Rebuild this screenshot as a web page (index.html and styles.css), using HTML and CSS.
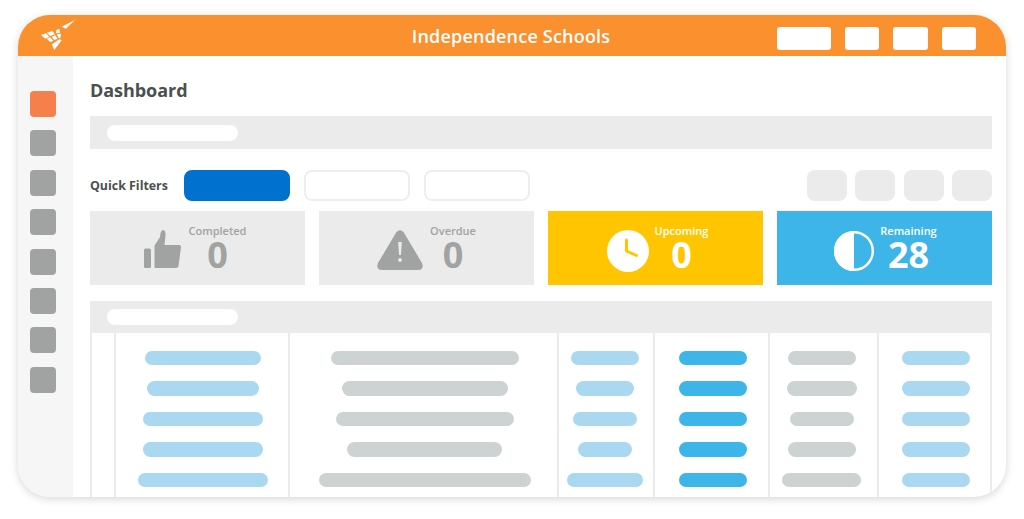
FILE: index.html
```html
<!DOCTYPE html>
<html lang="en">
<head>
<meta charset="utf-8">
<title>Independence Schools</title>
<link rel="stylesheet" href="styles.css">
</head>
<body>
<div class="window">
  <header class="topbar">
    <div class="top-left">
      <svg class="logo" viewBox="12 9 108 96" aria-hidden="true">
        <path d="M15 57 L30 52 L40 62 L27.500 68 Z" fill="#fff"/>
        <path d="M32.500 50 L48.600 45 L57 55 L42.400 60 Z" fill="#fff"/>
        <path d="M61 42 L69.800 38 L72.300 50 L59.800 52 Z" fill="#fff"/>
        <path d="M117 12 L77 32 L89.700 38 Z" fill="#fff"/>
        <path d="M32.500 68 L42.400 64 L52.400 74 L42.400 78 Z" fill="#fff"/>
        <path d="M47.400 62 L57.300 58 L64.800 68 L54.800 72 Z" fill="#fff"/>
        <path d="M62.300 55 L74.800 53 L73.500 65 L68.500 67 Z" fill="#fff"/>
        <path d="M47.400 85 L69.800 70 L77.200 73 L54.800 102 Z" fill="#fff"/>
      </svg>
    </div>
    <h1 class="app-title">Independence Schools</h1>
    <div class="top-actions">
      <span class="top-btn top-btn-wide"></span>
      <span class="top-btn"></span>
      <span class="top-btn"></span>
      <span class="top-btn"></span>
    </div>
  </header>
  <div class="body-row">
    <nav class="sidebar">
      <span class="nav-item nav-item-active"></span>
      <span class="nav-item"></span>
      <span class="nav-item"></span>
      <span class="nav-item"></span>
      <span class="nav-item"></span>
      <span class="nav-item"></span>
      <span class="nav-item"></span>
      <span class="nav-item"></span>
    </nav>
    <main class="content">
      <h2 class="page-title">Dashboard</h2>
      <div class="section-bar"><span class="section-pill"></span></div>
      <div class="filters">
        <span class="filters-label">Quick Filters</span>
        <span class="filter filter-on"></span>
        <span class="filter"></span>
        <span class="filter"></span>
        <div class="tools">
          <span class="tool"></span>
          <span class="tool"></span>
          <span class="tool"></span>
          <span class="tool"></span>
        </div>
      </div>
      <div class="cards">
        <div class="card card-grey card-completed">
          <svg class="icon icon-thumb" viewBox="0 0 37 38" aria-hidden="true">
            <rect x="0" y="18.500" width="7" height="19.500" rx="1.500"/>
            <path d="M10.500 37 V15.500 L16 7 Q16.500 0 19 0 Q22 0.500 21.500 6 L20.500 15 H35.500 Q37 15 37 17 L34.500 36 Q34.200 38 32 38 H11.500 Q10.500 38 10.500 37 Z"/>
          </svg>
          <div class="stat"><span class="stat-label">Completed</span><span class="stat-num">0</span></div>
        </div>
        <div class="card card-grey card-overdue">
          <svg class="icon icon-warn" viewBox="0 0 46 40" aria-hidden="true">
            <path fill-rule="evenodd" d="M19.500 2 Q23 -1.500 26.500 2 L45 33 Q47.500 40 41 40 H5 Q-1.500 40 1 33 Z M21.200 12 L22 25 H24 L24.800 12 Z M23 28 A1.900 1.900 0 1 0 23 31.800 A1.900 1.900 0 1 0 23 28 Z"/>
          </svg>
          <div class="stat"><span class="stat-label">Overdue</span><span class="stat-num">0</span></div>
        </div>
        <div class="card card-yellow card-upcoming">
          <svg class="icon icon-clock" viewBox="0 0 42 42" aria-hidden="true">
            <circle cx="21" cy="21" r="21" fill="#fff"/>
            <path d="M19.500 10 V21 L29.500 25.500" fill="none" stroke="#ffc600" stroke-width="3" stroke-linecap="round" stroke-linejoin="round"/>
          </svg>
          <div class="stat"><span class="stat-label">Upcoming</span><span class="stat-num">0</span></div>
        </div>
        <div class="card card-blue card-remaining">
          <svg class="icon icon-half" viewBox="0 0 40 40" aria-hidden="true">
            <circle cx="20" cy="20" r="18.800" fill="none" stroke="#fff" stroke-width="2.400"/>
            <path d="M20 0 A20 20 0 0 0 20 40 Z" fill="#fff"/>
          </svg>
          <div class="stat"><span class="stat-label">Remaining</span><span class="stat-num">28</span></div>
        </div>
      </div>
      <section class="table">
        <div class="section-bar table-head"><span class="section-pill"></span></div>
        <div class="table-grid">
          <div class="col"></div>
          <div class="col">
            <span class="pill pill-light" style="width:116px"></span>
            <span class="pill pill-light" style="width:112px"></span>
            <span class="pill pill-light" style="width:120px"></span>
            <span class="pill pill-light" style="width:120px"></span>
            <span class="pill pill-light" style="width:130px"></span>
          </div>
          <div class="col">
            <span class="pill pill-grey" style="width:188px"></span>
            <span class="pill pill-grey" style="width:166px"></span>
            <span class="pill pill-grey" style="width:178px"></span>
            <span class="pill pill-grey" style="width:155px"></span>
            <span class="pill pill-grey" style="width:212px"></span>
          </div>
          <div class="col col-nudge-sm">
            <span class="pill pill-light" style="width:68px"></span>
            <span class="pill pill-light" style="width:58px"></span>
            <span class="pill pill-light" style="width:64px"></span>
            <span class="pill pill-light" style="width:54px"></span>
            <span class="pill pill-light" style="width:76px"></span>
          </div>
          <div class="col">
            <span class="pill pill-strong" style="width:68px"></span>
            <span class="pill pill-strong" style="width:68px"></span>
            <span class="pill pill-strong" style="width:68px"></span>
            <span class="pill pill-strong" style="width:68px"></span>
            <span class="pill pill-strong" style="width:68px"></span>
          </div>
          <div class="col col-nudge-lg">
            <span class="pill pill-grey" style="width:68px"></span>
            <span class="pill pill-grey" style="width:70px"></span>
            <span class="pill pill-grey" style="width:64px"></span>
            <span class="pill pill-grey" style="width:68px"></span>
            <span class="pill pill-grey" style="width:79px"></span>
          </div>
          <div class="col">
            <span class="pill pill-light" style="width:68px"></span>
            <span class="pill pill-light" style="width:68px"></span>
            <span class="pill pill-light" style="width:68px"></span>
            <span class="pill pill-light" style="width:68px"></span>
            <span class="pill pill-light" style="width:68px"></span>
          </div>
        </div>
      </section>
    </main>
  </div>
</div>
</body>
</html>
```
FILE: styles.css
```css
* { box-sizing: border-box; }
html, body { margin: 0; height: 100%; overflow: hidden; background: #fff; }
body { padding: 15px 18px 22px; font-family: "Open Sans", "Liberation Sans", sans-serif; }

.window {
  height: 482px;
  display: flex;
  flex-direction: column;
  background: #fff;
  border-radius: 32px;
  overflow: hidden;
  box-shadow: 0 2px 8px rgba(0, 0, 0, .16);
}

.topbar {
  flex: none;
  height: 41px;
  display: grid;
  grid-template-columns: 1fr auto 1fr;
  align-items: center;
  background: #fb902f;
  padding: 0 30px 0 22px;
}
.top-left { display: flex; }
.logo { width: 36px; height: 32px; flex: none; margin-top: -1px; }
.app-title {
  margin: 0;
  text-align: center;
  font-size: 18px;
  font-weight: 600;
  color: #fff;
  padding-left: 6px;
  letter-spacing: .2px;
}
.top-actions { display: flex; justify-content: flex-end; gap: 14px; margin-top: 5px; }
.top-btn { width: 34.500px; height: 23px; background: #fff; border-radius: 3px; }
.top-btn-wide { width: 54px; }

.body-row { flex: 1; display: flex; min-height: 0; }

.sidebar {
  flex: none;
  width: 55px;
  background: #f6f6f6;
  padding: 35px 0 0 12px;
  display: flex;
  flex-direction: column;
  gap: 13.400px;
}
.nav-item { width: 26px; height: 26px; border-radius: 4px; background: #a0a3a2; }
.nav-item-active { background: #f5804c; }

.content { flex: 1; min-width: 0; padding: 0 14px 0 17px; display: flex; flex-direction: column; }

.page-title {
  margin: 21px 0 0;
  height: 39px;
  font-size: 18px;
  line-height: 26px;
  font-weight: 700;
  color: #4a4f4f;
  letter-spacing: -.05px;
}

.section-bar {
  flex: none;
  height: 33px;
  background: #ebebeb;
  padding: 9px 0 0 17px;
}
.section-pill { display: block; width: 131px; height: 16px; background: #fff; border-radius: 8px; }

.filters { flex: none; display: flex; align-items: center; margin-top: 21px; height: 31px; }
.filters-label { width: 94px; font-size: 12.400px; font-weight: 700; color: #4a4f4f; }
.filter {
  width: 106px;
  height: 31px;
  margin-right: 14px;
  border: 2px solid #eeeeee;
  border-radius: 8px;
  background: #fff;
}
.filter-on { background: #0071ce; border-color: #0071ce; }
.tools { margin-left: auto; display: flex; gap: 8.300px; }
.tool { width: 40px; height: 31px; background: #ebebeb; border-radius: 8px; }

.cards { flex: none; display: grid; grid-template-columns: repeat(4, 215px); column-gap: 14px; margin-top: 10px; }
.card { height: 74px; display: flex; align-items: center; justify-content: center; gap: 6px; }
.card-grey { background: #ebebeb; color: #a0a3a2; }
.card-yellow { background: #ffc600; color: #fff; }
.card-blue { background: #3db5e8; color: #fff; }

.icon { flex: none; display: block; }
.card-grey .icon { fill: #a0a3a2; }
.icon-thumb { width: 37px; height: 38px; margin-top: 2px; }
.icon-warn { width: 46px; height: 40px; margin-top: 3px; }
.icon-clock { width: 42px; height: 42px; margin-top: 5px; }
.icon-half { width: 40px; height: 40px; margin-top: 5px; }
.card-completed { padding-right: 5px; gap: 8px; }
.card-overdue { gap: 7px; }
.card-upcoming { padding-left: 4px; }
.card-remaining { padding-left: 2px; }

.stat { display: flex; flex-direction: column; align-items: center; }
.stat-label { font-size: 11px; line-height: 14px; font-weight: 600; }
.stat-num { font-size: 36px; line-height: 36px; font-weight: 700; margin-top: -1px; }

.table { flex: 1; min-height: 0; margin-top: 16px; display: flex; flex-direction: column; }
.table-head { height: 32px; padding-top: 8px; }
.table-grid {
  flex: 1;
  display: grid;
  grid-template-columns: 24px 174px 269px 96px 115px 109px 113px;
  width: 902px;
  border-left: 2px solid #ebebeb;
}
.col {
  display: flex;
  flex-direction: column;
  align-items: center;
  gap: 16px;
  padding: 18px 0 0 2px;
  border-right: 2px solid #ebebeb;
  min-width: 0;
}
.col-nudge-sm { padding-left: 0; padding-right: 2px; }
.col-nudge-lg { padding-left: 0; padding-right: 4px; }
.pill { flex: none; height: 14.400px; border-radius: 8px; }
.pill-light { background: #a9d8f0; }
.pill-grey { background: #cdd2d2; }
.pill-strong { background: #3db5e8; }
```
